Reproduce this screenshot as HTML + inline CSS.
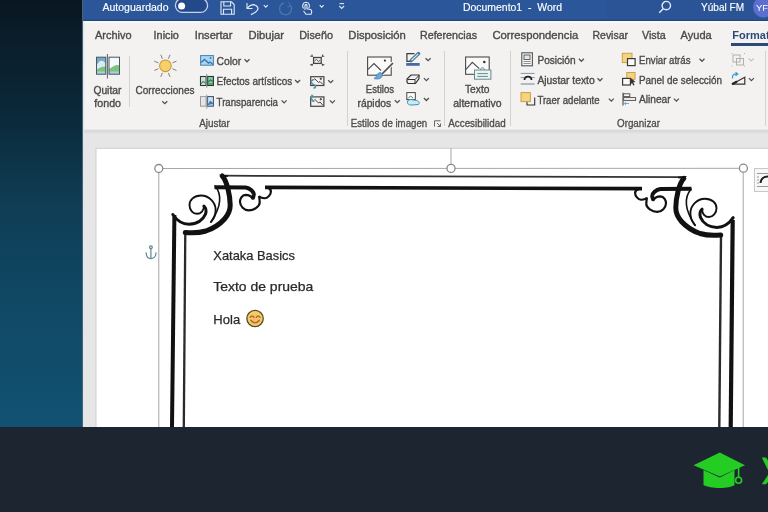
<!DOCTYPE html>
<html><head><meta charset="utf-8">
<style>
html,body{margin:0;padding:0;width:768px;height:512px;overflow:hidden;background:#1c2530;}
svg{display:block;will-change:transform;}
text{font-family:"Liberation Sans",sans-serif;}
</style></head>
<body>
<svg width="768" height="512" viewBox="0 0 768 512">
<defs>
<linearGradient id="bgl" x1="0" y1="0" x2="0" y2="1">
<stop offset="0" stop-color="#091720"/>
<stop offset="0.07" stop-color="#0a1c28"/>
<stop offset="0.26" stop-color="#0b2838"/>
<stop offset="0.49" stop-color="#0f3e56"/>
<stop offset="0.70" stop-color="#104864"/>
<stop offset="0.94" stop-color="#115070"/>
<stop offset="1" stop-color="#115272"/>
</linearGradient>
<linearGradient id="shd" x1="0" y1="0" x2="0" y2="1">
<stop offset="0" stop-color="#d5d5d5"/>
<stop offset="0.5" stop-color="#dcdcdc"/>
<stop offset="1" stop-color="#e6e6e7"/>
</linearGradient>
<radialGradient id="emo" cx="0.5" cy="0.55" r="0.55">
<stop offset="0" stop-color="#f7b873"/>
<stop offset="0.6" stop-color="#f6c868"/>
<stop offset="1" stop-color="#f3d47a"/>
</radialGradient>
</defs>
<!-- left background -->
<rect x="0" y="0" width="82" height="427" fill="url(#bgl)"/>
<!-- window -->
<rect x="82" y="0" width="686" height="21" fill="#2b579a"/>
<rect x="82" y="19.8" width="686" height="1.4" fill="#2a4274"/>
<rect x="82" y="21" width="686" height="109" fill="#f3f2f1"/>
<rect x="82" y="21" width="686" height="2.2" fill="#f5f8f9"/>
<rect x="607" y="0" width="161" height="20" fill="#2a5292" opacity="0.6"/>
<rect x="82" y="130" width="686" height="297" fill="#e6e6e7"/>
<rect x="82" y="129.7" width="686" height="4.5" fill="url(#shd)"/>
<rect x="82" y="0" width="1.2" height="427" fill="#4a6276"/>
<rect x="83" y="21" width="1.3" height="406" fill="#dde7f1"/>
<!-- page -->
<rect x="96" y="148.3" width="700" height="300" fill="#ffffff" stroke="#cdcdcd" stroke-width="1"/>

<!-- title bar text -->
<g fill="#ffffff" stroke="#ffffff" stroke-width="0.15" font-size="11">
<text x="102.5" y="10.5" textLength="66" lengthAdjust="spacingAndGlyphs">Autoguardado</text>
<text x="463" y="10.5" textLength="99" lengthAdjust="spacingAndGlyphs" xml:space="preserve">Documento1  -  Word</text>
<text x="701" y="10.8" textLength="43" lengthAdjust="spacingAndGlyphs">Yúbal FM</text>
</g>

<!-- tabs -->
<g fill="#4a4a4a" stroke="#4a4a4a" stroke-width="0.35" font-size="10.7">
<text x="95" y="39" textLength="36.5" lengthAdjust="spacingAndGlyphs">Archivo</text>
<text x="153.6" y="39" textLength="25.3" lengthAdjust="spacingAndGlyphs">Inicio</text>
<text x="194.8" y="39" textLength="37.7" lengthAdjust="spacingAndGlyphs">Insertar</text>
<text x="248.5" y="39" textLength="35.5" lengthAdjust="spacingAndGlyphs">Dibujar</text>
<text x="299.2" y="39" textLength="33.8" lengthAdjust="spacingAndGlyphs">Diseño</text>
<text x="348.3" y="39" textLength="57.6" lengthAdjust="spacingAndGlyphs">Disposición</text>
<text x="420" y="39" textLength="57" lengthAdjust="spacingAndGlyphs">Referencias</text>
<text x="492.4" y="39" textLength="85.8" lengthAdjust="spacingAndGlyphs">Correspondencia</text>
<text x="592.5" y="39" textLength="35.5" lengthAdjust="spacingAndGlyphs">Revisar</text>
<text x="642" y="39" textLength="23.6" lengthAdjust="spacingAndGlyphs">Vista</text>
<text x="680.6" y="39" textLength="31.1" lengthAdjust="spacingAndGlyphs">Ayuda</text>
</g>
<text x="732.3" y="38.8" font-size="11" font-weight="bold" fill="#2b4a78">Formato</text>
<rect x="731" y="43" width="37" height="3" fill="#2b4a78"/>


<!-- ribbon text -->
<g fill="#4a4a4a" stroke="#4a4a4a" stroke-width="0.35" font-size="10.7">
<text x="93.4" y="93.5" textLength="28" lengthAdjust="spacingAndGlyphs">Quitar</text>
<text x="94.3" y="106.6" textLength="26.7" lengthAdjust="spacingAndGlyphs">fondo</text>
<text x="135.6" y="93.5" textLength="58.9" lengthAdjust="spacingAndGlyphs">Correcciones</text>
<text x="216.6" y="64.6" textLength="24.6" lengthAdjust="spacingAndGlyphs">Color</text>
<text x="216.6" y="85.4" textLength="75.6" lengthAdjust="spacingAndGlyphs">Efectos artísticos</text>
<text x="216.6" y="105.8" textLength="61.4" lengthAdjust="spacingAndGlyphs">Transparencia</text>
<text x="365.8" y="93.2" textLength="28.2" lengthAdjust="spacingAndGlyphs">Estilos</text>
<text x="357.5" y="106.5" textLength="33.7" lengthAdjust="spacingAndGlyphs">rápidos</text>
<text x="465" y="92.8" textLength="24.5" lengthAdjust="spacingAndGlyphs">Texto</text>
<text x="453.3" y="106.5" textLength="48.2" lengthAdjust="spacingAndGlyphs">alternativo</text>
<text x="537.4" y="63.8" textLength="38.2" lengthAdjust="spacingAndGlyphs">Posición</text>
<text x="537.4" y="83.9" textLength="57.3" lengthAdjust="spacingAndGlyphs">Ajustar texto</text>
<text x="537.4" y="103.6" textLength="62.2" lengthAdjust="spacingAndGlyphs">Traer adelante</text>
<text x="639" y="63.8" textLength="51.5" lengthAdjust="spacingAndGlyphs">Enviar atrás</text>
<text x="639" y="83.9" textLength="83" lengthAdjust="spacingAndGlyphs">Panel de selección</text>
<text x="639" y="103.4" textLength="31.6" lengthAdjust="spacingAndGlyphs">Alinear</text>
</g>
<g fill="#4c4c4c" stroke="#4c4c4c" stroke-width="0.3" font-size="10">
<text x="199.2" y="126.6" textLength="30.7" lengthAdjust="spacingAndGlyphs">Ajustar</text>
<text x="350.8" y="126.6" textLength="76.4" lengthAdjust="spacingAndGlyphs">Estilos de imagen</text>
<text x="448.3" y="126.6" textLength="57.3" lengthAdjust="spacingAndGlyphs">Accesibilidad</text>
<text x="617" y="126.6" textLength="43.1" lengthAdjust="spacingAndGlyphs">Organizar</text>
</g>
<!-- separators -->
<g fill="#d2d2d2">
<rect x="129" y="56" width="1" height="51"/>
<rect x="347" y="51" width="1" height="75"/>
<rect x="444" y="51" width="1" height="75"/>
<rect x="510" y="51" width="1" height="75"/>
<rect x="765" y="51" width="1" height="75"/>
</g>



<!-- title bar icons -->
<g fill="none" stroke="#dfe7f5" stroke-width="1.1">
<rect x="175.4" y="-1.6" width="32.2" height="14" rx="7" fill="#24498a" stroke="#c4d4ee" stroke-width="1.3"/>
<path d="M221,1.8 H231.5 L234.2,4.5 V14.2 H221 Z"/>
<path d="M223.8,1.8 V6 H230.6 V1.8"/>
<path d="M223.5,14.2 V9.3 H231.6 V14.2"/>
<path d="M247,3 V8.5 H252.5"/>
<path d="M247.3,8.2 C250,4.5 254,3.8 256.6,6 C259.5,8.5 257.5,12 251,14.6" stroke-width="1.3"/>
<path d="M263.8,5.2 L265.8,7.2 L267.8,5.2"/>
<path d="M319.7,5.2 L321.7,7.2 L323.7,5.2"/>
<path d="M339.5,3.6 H344" />
<path d="M339.3,6 L341.7,8.4 L344.1,6"/>
</g>
<g fill="none" stroke="#4f74b0" stroke-width="1.3">
<path d="M284,3 A6,6 0 1 0 290.5,5.5"/>
<path d="M288.5,2.5 L291,5.8 L287.5,6.8" stroke-width="1"/>
</g>
<circle cx="181.6" cy="6" r="3.5" fill="#ffffff"/>
<g fill="none" stroke="#e6ecf7" stroke-width="1.1">
<path d="M303.5,8.5 C302,6.5 302.5,2.5 306,2.2 C309.5,2.2 310.2,6 308.8,8.3"/>
<path d="M305,10 V5.5 C305,4.3 307,4.3 307,5.5 V8.8 L310.5,9.5 C312,10 312,12.5 311,14.3 H306 L303.5,11"/>
</g>
<g fill="none" stroke="#e3ebf7" stroke-width="1.4">
<circle cx="666.3" cy="5.6" r="4.2"/>
<line x1="663.2" y1="8.7" x2="659.2" y2="12.7"/>
</g>
<circle cx="763.5" cy="7" r="10.5" fill="#5b6fd0"/>
<text x="756" y="10.7" font-size="9.5" fill="#ffffff">YF</text>

<!-- Quitar fondo -->
<g>
<rect x="96.5" y="57.2" width="9.3" height="17" fill="#d6ecf6"/>
<path d="M96.5,57.2 H105.8 V64 C104,60.5 101,60 99,62 C97.5,63.5 97,64.5 96.5,65 Z" fill="#7aa8c8"/>
<path d="M96.5,70 C99,67.5 103,66 105.8,66.5 V72 H96.5 Z" fill="#7cc27a"/>
<rect x="96.5" y="71.5" width="9.3" height="2.8" fill="#a9d0e2"/>
<rect x="109" y="57.2" width="10.5" height="17" fill="#f4fafc"/>
<path d="M109,69 C112,67.5 114,65 117,65 C118,65 119,65.5 119.5,66 V72 H109 Z" fill="#7cc27a"/>
<rect x="109" y="71.5" width="10.5" height="2.8" fill="#a9d0e2"/>
<rect x="96.5" y="57.2" width="9.3" height="17" fill="none" stroke="#4b5661" stroke-width="1"/>
<rect x="109" y="57.2" width="10.5" height="17" fill="none" stroke="#4b5661" stroke-width="1"/>
<line x1="107.4" y1="54" x2="107.4" y2="78.5" stroke="#5a5f66" stroke-width="1"/>
</g>
<!-- sun -->
<g>
<circle cx="165.4" cy="65.8" r="5.8" fill="#f8d06a" stroke="#c89a3c" stroke-width="1.1"/>
<g stroke="#8a7d6a" stroke-width="1" stroke-linecap="round">
<line x1="162.3" y1="58.4" x2="160.9" y2="55.1"/>
<line x1="168.5" y1="58.4" x2="169.9" y2="55.1"/>
<line x1="172.8" y1="62.7" x2="176.1" y2="61.3"/>
<line x1="172.8" y1="68.9" x2="176.1" y2="70.3"/>
<line x1="168.5" y1="73.2" x2="169.9" y2="76.5"/>
<line x1="162.3" y1="73.2" x2="160.9" y2="76.5"/>
<line x1="158" y1="68.9" x2="154.7" y2="70.3"/>
<line x1="158" y1="62.7" x2="154.7" y2="61.3"/>
</g>
</g>
<!-- Color / Efectos / Transparencia icons -->
<g>
<rect x="200.6" y="55.6" width="12.8" height="9.6" fill="#a9d5f6" stroke="#4a7fa8" stroke-width="1"/>
<path d="M201,62.5 L204.5,59.5 L208.5,63 L210,62 L213,64.5" fill="none" stroke="#3a78b0" stroke-width="1.4"/>
<circle cx="210.5" cy="58" r="0.9" fill="#3a78b0"/>

<rect x="200.5" y="76.5" width="5.6" height="9" fill="#cfe5da" stroke="#2e3b38" stroke-width="1.1"/>
<rect x="207.6" y="76.5" width="5.8" height="9" fill="#8cc7a8" stroke="#1f3d33" stroke-width="1.1"/>
<path d="M201,84 L203,81.5 L205.6,83" stroke="#3f8a62" stroke-width="1.2" fill="none"/>
<path d="M208,82 L210.5,80 L213,81.5 M208,84 H213" stroke="#2f7a52" stroke-width="1.2" fill="none"/>
<line x1="206.8" y1="74" x2="206.8" y2="87.6" stroke="#8a9090" stroke-width="1"/>

<rect x="200.5" y="96.6" width="5.6" height="9.6" fill="#e6e6e6" stroke="#9a9a9a" stroke-width="1"/>
<rect x="207.6" y="96.6" width="5.8" height="9.6" fill="#cfe3f2" stroke="#2e4a6a" stroke-width="1"/>
<path d="M208,105 L210.5,101.5 L213,104" fill="#3f7ab0" stroke="#3f7ab0" stroke-width="1.2"/>
<line x1="206.8" y1="94.7" x2="206.8" y2="108.8" stroke="#9aa0a4" stroke-width="1"/>
</g>
<!-- compress / change / reset -->
<g fill="none" stroke="#444" stroke-width="1">
<rect x="313.6" y="57.5" width="7.6" height="5.9" stroke-width="1.3"/>
<path d="M314.5,61 L316.5,59.3 L318.5,61.5 L320,60.3" stroke-width="0.9"/>
<path d="M310.2,56.3 H313 M312,54.5 V57 M321.8,56.3 H324.3 M322.6,54.5 V57 M310.2,64.6 H313 M312,63.8 V66 M321.8,64.6 H324.3 M322.6,63.8 V66" stroke="#555" stroke-width="1.1"/>
<rect x="310.7" y="76.7" width="13.2" height="8.8" stroke-width="1.2"/>
<path d="M314.5,78.5 L318.5,82.5 L320,81.5 L323,84.5" stroke-width="1"/>
<circle cx="320.8" cy="78.8" r="0.7" fill="#444"/>
<rect x="310.7" y="96.9" width="13.2" height="9.4" stroke-width="1.2"/>
<path d="M314.5,99 L318.5,103 L320,102 L323,105.3" stroke-width="1"/>
<circle cx="320.8" cy="99.2" r="0.7" fill="#444"/>
</g>
<path d="M314.5,79.5 C311.5,79.5 310.5,82 312,83.5 C313.5,85 315.5,84.5 315.5,86.5 C315.5,87.5 314.5,88 313.5,88" fill="none" stroke="#5a8ea8" stroke-width="1.6"/>
<path d="M311.5,96.5 C311,99 312,101 314.5,101.5" fill="none" stroke="#5a94a8" stroke-width="1.6"/>
<path d="M310.2,97.5 L312,95 L314,97" fill="none" stroke="#5a94a8" stroke-width="1.1"/>
<!-- estilos rapidos -->
<g>
<rect x="367.6" y="57" width="23.6" height="18.2" fill="#fafafa" stroke="#4a4a4a" stroke-width="1.1"/>
<path d="M368,69.3 L374,63.5 L381,70.5" fill="none" stroke="#4a4a4a" stroke-width="1.1"/>
<circle cx="384.9" cy="60.6" r="1.1" fill="#333"/>
<path d="M392.5,63 L382,73.5" stroke="#f4f4f4" stroke-width="4"/>
<path d="M392.5,63.5 L382.5,73.5" stroke="#4a4a4a" stroke-width="1.6" stroke-linecap="round"/>
<path d="M381.5,73 C383.5,75 382,78.5 378,79 C376,79.2 374.5,78.8 374,78.5 C376,77.5 376.5,75.5 377.5,74 C378.5,72.5 380.5,72 381.5,73 Z" fill="#6aa6dc" stroke="#3a6ea0" stroke-width="0.6"/>
</g>
<!-- borde / efectos / diseño -->
<g>
<path d="M414.5,53.7 H406.9 V61.3 H410" fill="none" stroke="#3a3a3a" stroke-width="1.2"/>
<path d="M418.6,53.6 L411.2,60.6" fill="none" stroke="#4a7494" stroke-width="3.4" stroke-linecap="round"/>
<path d="M418.3,53.9 L411.5,60.3" fill="none" stroke="#cde6f2" stroke-width="1.3"/>
<rect x="406.2" y="63" width="13.5" height="2.8" fill="#4a68a8"/>
<path d="M407,82 L407,79 L411,75 H419 V78.5 L415.5,83.5 H408 Z" fill="#f0f0f0" stroke="#333" stroke-width="1.2"/>
<path d="M407.5,79.5 H415 L419,75.5 M415,79.5 V83.5" fill="none" stroke="#333" stroke-width="1"/>
<rect x="406.8" y="92.6" width="8.5" height="7" fill="#fff" stroke="#444" stroke-width="1"/>
<path d="M408,98.5 L410.5,96 L413,98" fill="none" stroke="#444" stroke-width="0.8"/>
<path d="M408.5,100 C406,102.5 408,105.5 412,105 L418.5,104.5 C420,103.5 419,101 416.5,100.5 L411,99.5 Z" fill="#c9ecf2" stroke="#3e8fb5" stroke-width="1"/>
</g>
<!-- dialog launcher -->
<g fill="none" stroke="#666" stroke-width="1">
<path d="M434.5,126.5 V120.8 H440.5"/>
<path d="M437,123 L440.5,126.5 M440.5,123.5 V126.5 H437.5"/>
</g>
<!-- texto alternativo -->
<g>
<rect x="465.6" y="57" width="23.6" height="17.3" fill="#fafafa" stroke="#4a4a4a" stroke-width="1.1"/>
<path d="M466,69.3 L472.3,62.3 L479.3,68.6" fill="none" stroke="#4a4a4a" stroke-width="1.1"/>
<circle cx="484.3" cy="62" r="1.3" fill="#333"/>
<path d="M480.5,70 C480.5,67 484.5,67 484.5,70" fill="#e8f4f4" stroke="#6a8a8a" stroke-width="1"/>
<rect x="474.5" y="70" width="16.4" height="9.2" fill="#e8f4f4" stroke="#6a8a8a" stroke-width="1"/>
<line x1="477.3" y1="73.6" x2="487.9" y2="73.6" stroke="#6a8a8a" stroke-width="1"/>
<line x1="477.3" y1="76.4" x2="487.9" y2="76.4" stroke="#6a8a8a" stroke-width="1"/>
</g>
<!-- posicion / ajustar / traer -->
<g>
<rect x="521.8" y="52.8" width="10.6" height="13" fill="#f6f6f6" stroke="#555" stroke-width="1.1"/>
<rect x="524" y="55" width="6" height="4.5" fill="#dfe8ee" stroke="#555" stroke-width="0.9"/>
<line x1="523.5" y1="61.5" x2="530.8" y2="61.5" stroke="#777" stroke-width="0.8"/>
<line x1="523.5" y1="63.5" x2="530.8" y2="63.5" stroke="#777" stroke-width="0.8"/>
<line x1="520.7" y1="73.4" x2="534.7" y2="73.4" stroke="#7a98b0" stroke-width="1"/>
<line x1="520.7" y1="77.6" x2="524.5" y2="77.6" stroke="#7a98b0" stroke-width="1"/>
<line x1="531" y1="77.6" x2="534.7" y2="77.6" stroke="#7a98b0" stroke-width="1"/>
<line x1="520.7" y1="84" x2="534.7" y2="84" stroke="#7a98b0" stroke-width="1.2"/>
<path d="M524.5,80 C524.5,75.5 531.5,75.5 531.5,80" fill="none" stroke="#222" stroke-width="1.7"/>
<path d="M527,97.5 V105 H534.7 V97.5" fill="none" stroke="#333" stroke-width="1.1"/>
<rect x="521" y="92.6" width="9.4" height="9" fill="#f6d37e" stroke="#c9a24c" stroke-width="1"/>
</g>
<!-- enviar / panel / alinear -->
<g>
<rect x="622.3" y="53.3" width="9.7" height="9.3" fill="#f6d37e" stroke="#c9a24c" stroke-width="1"/>
<rect x="627.5" y="58.6" width="7.6" height="7" fill="#fafafa" stroke="#3a3a3a" stroke-width="1.2"/>
<rect x="626.8" y="72.5" width="8.2" height="6.8" fill="#f6d37e" stroke="#c9a24c" stroke-width="1"/>
<rect x="622.6" y="78.4" width="7.8" height="6.6" fill="#fafafa" stroke="#3a3a3a" stroke-width="1.2"/>
<path d="M630.8,78 L635.5,82 L633.2,82.3 L634.5,85 L633.3,85.5 L632,83 L630.8,84.5 Z" fill="#333"/>
<line x1="623" y1="92.7" x2="623" y2="105.5" stroke="#555" stroke-width="1.2"/>
<rect x="623.6" y="93.8" width="6.2" height="2.8" fill="#fafafa" stroke="#555" stroke-width="1"/>
<rect x="623.6" y="97.6" width="12" height="2.8" fill="#fafafa" stroke="#555" stroke-width="1"/>
<path d="M624.5,103.5 H629 M626,102 L624.3,103.5 L626,105" fill="none" stroke="#5aa8d8" stroke-width="0.9"/>
</g>
<!-- agrupar / girar -->
<g fill="none" stroke="#b0b0b0" stroke-width="1">
<rect x="733" y="55" width="7" height="7"/>
<rect x="736.5" y="58.5" width="7" height="6.5"/>
<path d="M731.5,53.5 h1 M744,53.5 h1 M731.5,66 h1 M744,66 h1"/>
</g>
<path d="M732.5,78.5 C732,75 734,73.5 737.5,74 M735.5,72.3 L737.8,74 L735.5,75.8" fill="none" stroke="#3a9ad0" stroke-width="1.2"/>
<path d="M732,84.2 L744.8,77.3 V84.2 Z" fill="#f4f4f4" stroke="#333" stroke-width="1.2"/>
<path d="M732,84.2 L737,81.5" stroke="#222" stroke-width="2"/>

<!-- chevrons -->
<g fill="none" stroke="#505050" stroke-width="1.25">
<path d="M162.3,101.2 L164.8,103.7 L167.3,101.2"/>
<path d="M244.5,59.3 L247,61.8 L249.5,59.3"/>
<path d="M295.1,80.0 L297.6,82.5 L300.1,80.0"/>
<path d="M281.6,100.4 L284.1,102.9 L286.6,100.4"/>
<path d="M328.2,80.2 L330.7,82.7 L333.2,80.2"/>
<path d="M329.9,100.4 L332.4,102.9 L334.9,100.4"/>
<path d="M394.8,100.2 L397.3,102.7 L399.8,100.2"/>
<path d="M425.6,58.2 L428.1,60.7 L430.6,58.2"/>
<path d="M423.9,78.1 L426.4,80.6 L428.9,78.1"/>
<path d="M423.9,98.0 L426.4,100.5 L428.9,98.0"/>
<path d="M578.9,58.8 L581.4,61.3 L583.9,58.8"/>
<path d="M597.5,78.3 L600.0,80.8 L602.5,78.3"/>
<path d="M608.8,98.6 L611.3,101.1 L613.8,98.6"/>
<path d="M699.5,58.8 L702.0,61.3 L704.5,58.8"/>
<path d="M673.9,98.6 L676.4,101.1 L678.9,98.6"/>
<path d="M748.9,78.1 L751.4,80.6 L753.9,78.1"/>
</g>
<path d="M748.7,58.4 L751.2,60.9 L753.7,58.4" fill="none" stroke="#c4c4c4" stroke-width="1.2"/>

<!-- selection box -->
<g fill="none" stroke="#a6a6a6" stroke-width="1">
<line x1="158.8" y1="168.5" x2="743.4" y2="168.3"/>
<line x1="158.8" y1="168.5" x2="158.8" y2="427"/>
<line x1="743.2" y1="168.3" x2="743.2" y2="427"/>
<line x1="451" y1="148" x2="451" y2="164"/>
</g>
<g fill="#ffffff" stroke="#8a8a8a" stroke-width="1.3">
<circle cx="158.8" cy="168.5" r="4"/>
<circle cx="451" cy="168.4" r="4"/>
<circle cx="743.4" cy="168.2" r="4"/>
</g>
<!-- frame straight lines -->
<g fill="none" stroke="#111" stroke-linecap="butt">
<line x1="222" y1="175.7" x2="686" y2="177.1" stroke-width="1.8" stroke="#333"/>
<line x1="265" y1="187.4" x2="642" y2="188.7" stroke-width="3.7"/>
<line x1="174.4" y1="215" x2="172" y2="427" stroke-width="4"/>
<line x1="185.3" y1="231" x2="183.8" y2="427" stroke-width="2.3" stroke="#2a2a2a"/>
<line x1="732.7" y1="220" x2="730.7" y2="427" stroke-width="4.2"/>
<line x1="721" y1="236" x2="719.3" y2="427" stroke-width="2.4" stroke="#2a2a2a"/>
</g>
<!-- corner ornament left -->
<g id="ornA" fill="none" stroke="#111" stroke-linecap="round">
<path d="M219,174.6 L228,175.2 L228,176.8 L222,177.2 Z" fill="#111" stroke="none"/>
<path d="M214.5,187.3 L245.6,187.4 C250,188 254,192 253.8,194.5 C253.5,196.5 253,198 252.5,198.6" stroke-width="4" stroke-linecap="butt"/>
<path d="M252.5,198.6 C251,196 248,194.8 245.6,194.8 C242,195 239.8,199 240,202 C240.2,206 244,210.4 248.75,210.4 C254,210.4 259.7,206.5 259.7,202.6 C259.7,200 259.3,197.5 259,196 C260,197.5 262.5,198.3 265,198.25 C268,198 270.9,194.5 270.9,191.4 C270.9,189.5 270,188.3 267,187.4" stroke-width="2.2"/>
</g>
<g id="ornB" fill="none" stroke="#111" stroke-linecap="round">
<path d="M222.2,176 C227,181 230,195 230.2,205 C230.3,211 228,215 224.5,219 C220,224 213,228.6 206,231 C199,233 191,233 185.3,232.4" stroke-width="5"/>
</g>
<g id="ornC" fill="none" stroke="#111" stroke-linecap="round">
<path d="M211,222 C214,218.5 216,214 215.6,209 C215,202 209,195.5 201,195.5 C194,195.5 189.5,200 189.5,205 C189.5,210 193,213.8 197,213.8 C201,213.8 204,210.5 203.9,206" stroke-width="1.9"/>
<path d="M172.8,214.5 C176.5,220 182,224.2 189,224.2 C197,224.2 203,220 205.5,214.2 C206.6,211 206,208 203.9,206" stroke-width="3"/>
<path d="M215,186 C218.5,190 220,196 219.6,201 C219,209 215,216 211,222" stroke-width="1.6"/>
</g>
<use href="#ornA" transform="translate(906,1.5) scale(-1,1)"/>
<use href="#ornB" transform="translate(906,2.5) scale(-1,1)"/>
<use href="#ornC" transform="translate(906,3.2) scale(-1,1)"/>


<!-- document text -->
<g fill="#2a2a2a" stroke="#2a2a2a" stroke-width="0.25" font-size="12.6">
<text x="213.3" y="260" textLength="81.7" lengthAdjust="spacingAndGlyphs">Xataka Basics</text>
<text x="213.3" y="291" textLength="100" lengthAdjust="spacingAndGlyphs">Texto de prueba</text>
<text x="213.3" y="323.5" textLength="26.9" lengthAdjust="spacingAndGlyphs">Hola</text>
</g>
<!-- emoji -->
<g>
<circle cx="255.05" cy="318.5" r="8.2" fill="url(#emo)" stroke="#5a4a22" stroke-width="1.3"/>
<path d="M250,317.3 Q252,314.8 254,317.3" fill="none" stroke="#a86a22" stroke-width="1.3" stroke-linecap="round"/>
<path d="M256.2,317.3 Q258.2,314.8 260.2,317.3" fill="none" stroke="#a86a22" stroke-width="1.3" stroke-linecap="round"/>
<path d="M250.8,320.3 Q255.1,325.5 259.4,320.3" fill="none" stroke="#a86a22" stroke-width="1.4" stroke-linecap="round"/>
</g>
<!-- anchor -->
<g fill="none" stroke="#5f8791" stroke-width="1.2" stroke-linecap="round">
<circle cx="150.9" cy="247.3" r="1.4"/>
<line x1="150.9" y1="248.8" x2="150.9" y2="258.4"/>
<path d="M146.2,252.8 C146.3,256.5 148.3,258.6 150.9,258.6 C153.5,258.6 155.9,256.5 156,252.8"/>
</g>
<!-- layout options button -->
<rect x="754.5" y="168.5" width="16" height="23" fill="#f7f7f7" stroke="#c8c8c8" stroke-width="1"/>
<g fill="#9a9a9a">
<rect x="757" y="173" width="11" height="1"/>
<rect x="757" y="186" width="11" height="1"/>
<rect x="757" y="176.5" width="2" height="1"/>
<rect x="757" y="179.5" width="2" height="1"/>
<rect x="757" y="182.5" width="2" height="1"/>
</g>
<path d="M760.5,183 C761,178.5 764,176.5 768,176.5" fill="none" stroke="#222" stroke-width="2"/>

<!-- bottom bar -->
<rect x="0" y="427" width="768" height="85" fill="#1c2530"/>

<!-- grad cap -->
<g fill="#24cc24">
<path d="M693.5,465.3 L719.8,452.5 L745,465.3 L719.8,476.5 Z"/>
<path d="M703.5,470 L719.8,477.5 L734.5,470 L734.5,485 C730,489 710,489 703.5,485 Z"/>
<rect x="737.8" y="466" width="1.6" height="11"/>
<circle cx="738.6" cy="480.2" r="3" fill="none" stroke="#24cc24" stroke-width="1.6"/>
</g>
<path d="M761.8,457.6 L766,457.6 L768,460.5 L768,470 Z M761.8,484.3 L768,475 L768,482 L766,484.3 Z" fill="#24cc24"/>
</svg>
</body></html>
